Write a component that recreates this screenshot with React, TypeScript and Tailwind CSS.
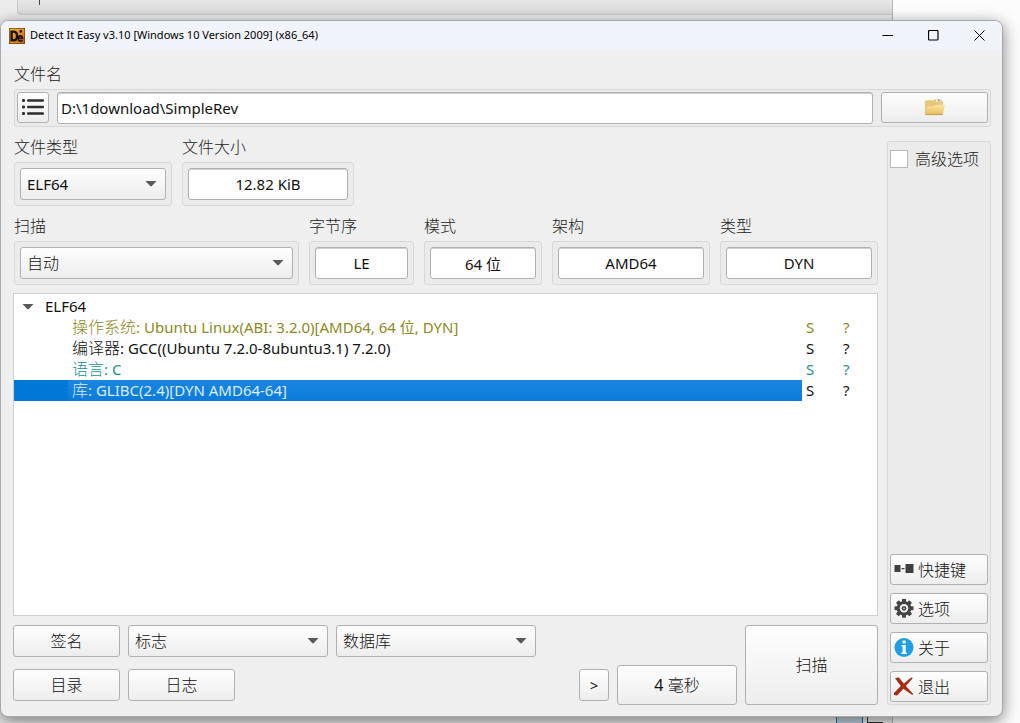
import React, { useState } from 'react';

const control = 'border border-[#b0b0b0] rounded-[3px]';
const raised = `${control} bg-linear-to-b from-[#fefefe] to-[#ededed]`;
const panel = 'border border-[#d8d8d8] rounded-[3px] bg-[#ebebeb]';

function Arrow({ className = '' }: { className?: string }) {
    return (
        <svg className={className} width="12" height="6" viewBox="0 0 12 6" aria-hidden="true">
            <path d="M0.5 0h11L6.6 5.2h-1.2z" fill="#595959" />
        </svg>
    );
}

function Select({ id, label, options, className = '' }: { id: string; label?: string; options: string[]; className?: string }) {
    return (
        <div className={`relative ${className}`}>
            <select id={id} aria-label={label} className={`${raised} block w-full h-8 appearance-none pl-1.5 pr-7`}>
                {options.map((option) => (
                    <option key={option}>{option}</option>
                ))}
            </select>
            <Arrow className="absolute right-[9px] top-[13px] pointer-events-none" />
        </div>
    );
}

function Field({ id, label, className = '', children }: { id: string; label: string; className?: string; children: React.ReactNode }) {
    return (
        <div className={className}>
            <label htmlFor={id} className="block h-6 leading-6 mb-[3px] font-light text-[#222]">{label}</label>
            <div className={`${panel} h-11 p-[5px]`}>{children}</div>
        </div>
    );
}

function ReadOnly({ id, value }: { id: string; value: string }) {
    return (
        <input
            id={id}
            readOnly
            defaultValue={value}
            className={`${control} block w-full h-8 bg-white text-center text-[15px] shadow-[inset_0_1px_0_#d0d0d0]`}
        />
    );
}

function Button({ className = '', children }: { className?: string; children: React.ReactNode }) {
    return <button type="button" className={`${raised} text-[#111] ${className}`}>{children}</button>;
}

function SideButton({ icon, children }: { icon: React.ReactNode; children: React.ReactNode }) {
    return (
        <button type="button" className={`${raised} w-full h-[31px] flex items-center gap-1 pl-[3px] font-light text-[#111]`}>
            {icon}
            <span>{children}</span>
        </button>
    );
}

function AppIcon() {
    return (
        <svg width="16" height="16" viewBox="0 0 16 16" aria-hidden="true">
            <defs>
                <linearGradient id="app" x1="0" y1="0" x2="1" y2="1">
                    <stop offset="0" stopColor="#efb52c" />
                    <stop offset="0.5" stopColor="#e58f20" />
                    <stop offset="1" stopColor="#c95d18" />
                </linearGradient>
            </defs>
            <rect width="16" height="16" fill="#5e3a10" />
            <rect x="0.6" y="0.6" width="14.8" height="14.8" fill="url(#app)" />
            <path d="M2.6 3.6h1.800c2.6 0 3.700 1.6 3.700 4.300s-1.100 4.400-3.700 4.400H2.6z" fill="none" stroke="#191307" strokeWidth="2.4" />
            <path d="M9.3 10.4h4.2c0-3.4-4.4-3.4-4.4 0 0 3.1 3.2 3.3 4.5 1.9" fill="none" stroke="#191307" strokeWidth="1.6" />
            <circle cx="11.8" cy="3.4" r="1.3" fill="#191307" />
        </svg>
    );
}

function ListIcon() {
    return (
        <svg width="22" height="18" viewBox="0 0 22 18" aria-hidden="true">
            <g fill="#2e2e2e">
                <rect x="0" y="0" width="3" height="3" rx="1" />
                <rect x="0" y="6.5" width="3" height="3" rx="1" />
                <rect x="0" y="13" width="3" height="3" rx="1" />
                <rect x="5" y="0.2" width="17" height="2.6" rx="1" />
                <rect x="5" y="6.7" width="17" height="2.6" rx="1" />
                <rect x="5" y="13.2" width="17" height="2.6" rx="1" />
            </g>
        </svg>
    );
}

function FolderIcon() {
    return (
        <svg width="22" height="18" viewBox="0 0 22 18" aria-hidden="true">
            <defs>
                <linearGradient id="folder" x1="0" y1="0" x2="0" y2="1">
                    <stop offset="0" stopColor="#fbe6a0" />
                    <stop offset="1" stopColor="#e6bd5c" />
                </linearGradient>
            </defs>
            <path d="M1 15.700V2.400L2 1.200h8l1.200-1.200h5.600L18 1.400l1 1.600V8.200l-2 7.500z" fill="#e7c878" />
            <path d="M12 0.800h5v1.600h-5z" fill="#f8f5e6" />
            <path d="M14 0.800h2v1.400h-2z" fill="#69b5c4" />
            <path d="M3.500 7.400l7-0.400 1-1H21l-2.400 9.800H1.400z" fill="url(#folder)" />
            <path d="M1.400 15.600h17.200" stroke="#c79d45" />
        </svg>
    );
}

function ShortcutIcon() {
    return (
        <svg width="20" height="20" viewBox="0 0 20 20" aria-hidden="true">
            <path d="M0.5 5h6v7h-6zM11.500 4h8v9h-8zM7.500 8h3v1.200h-3z" fill="#3f3f3f" />
        </svg>
    );
}

function GearIcon() {
    return (
        <svg width="20" height="20" viewBox="0 0 20 20" aria-hidden="true">
            <g fill="#444">
                {[0, 45, 90, 135].map((angle) => (
                    <rect key={angle} x="8" y="-0.2" width="4" height="19" rx="0.8" transform={`rotate(${angle} 10 9.3)`} />
                ))}
                <circle cx="10" cy="9.3" r="7.3" />
            </g>
            <circle cx="10" cy="9.3" r="4.2" fill="#f5f5f5" />
            <circle cx="10" cy="9.3" r="2.4" fill="#444" />
            <circle cx="10" cy="9.3" r="0.8" fill="#f5f5f5" />
        </svg>
    );
}

function InfoIcon() {
    return (
        <svg width="20" height="20" viewBox="0 0 20 20" aria-hidden="true">
            <circle cx="10" cy="9.5" r="9.5" fill="#1e9fe3" />
            <rect x="8.5" y="2.5" width="3.2" height="3" rx="0.8" fill="#fff" />
            <path d="M7.6 7h4.100v7.500h1.100V16H7.400v-1.500h1.200v-6h-1z" fill="#fff" />
        </svg>
    );
}

function ExitIcon() {
    return (
        <svg width="20" height="20" viewBox="0 0 20 20" aria-hidden="true">
            <path
                d="M1 1.300L4.700 0.200 9.900 6.600 17.200 0.500 18.900 1.100 11.800 9.100 19.200 17.100 18.300 17.900 9.300 11.700 3.200 18.500 0 17.900 0 15.900 6.800 9.100z"
                fill="#a82c12"
            />
        </svg>
    );
}

const rows = [
    { kind: '操作系统', text: 'Ubuntu Linux(ABI: 3.2.0)[AMD64, 64 位, DYN]', color: 'text-[#8c8a1c]' },
    { kind: '编译器', text: 'GCC((Ubuntu 7.2.0-8ubuntu3.1) 7.2.0)', color: 'text-[#111]' },
    { kind: '语言', text: 'C', color: 'text-[#1a8f8f]' },
    { kind: '库', text: 'GLIBC(2.4)[DYN AMD64-64]', color: 'text-[#111]' },
];

function ResultTree() {
    const [open, setOpen] = useState(true);
    const [selected, setSelected] = useState(3);

    return (
        <div className="flex-1 bg-white border border-[#cfcfcf] pt-0.5">
            <table className="w-full table-fixed border-collapse text-[15px] leading-[21px]">
                <colgroup>
                    <col />
                    <col className="w-[37px]" />
                    <col className="w-[38px]" />
                </colgroup>
                <tbody>
                    <tr className="h-[21px]">
                        <td className="p-0" colSpan={3}>
                            <button type="button" className="h-[21px] flex items-center gap-[11px] pl-2" onClick={() => setOpen(!open)}>
                                <Arrow className={open ? '' : '-rotate-90'} />
                                ELF64
                            </button>
                        </td>
                    </tr>
                    {open && rows.map((row, i) => (
                        <tr key={row.text} className={`h-[21px] ${row.color}`} onClick={() => setSelected(i)}>
                            <td className={i === selected ? 'p-0 pl-[54px] bg-[#0078d7] text-[#dcecfa]' : 'p-0 pl-[54px]'}>
                                <div className={i === selected ? 'h-[21px] pl-1 whitespace-nowrap bg-linear-to-b from-[#1a86df] to-[#0a7bdb]' : 'h-[21px] pl-1 whitespace-nowrap'}>
                                    <span className="text-[16px] font-light">{row.kind}</span>: {row.text}
                                </div>
                            </td>
                            <td className="p-0 pl-1">S</td>
                            <td className="p-0 pl-1">?</td>
                        </tr>
                    ))}
                </tbody>
            </table>
        </div>
    );
}

function TitleBar() {
    return (
        <header className="h-[29px] flex items-center bg-[#f0f3f9] pl-2 text-black">
            <AppIcon />
            <h1 className="ml-[5px] flex-1 text-[11px]">Detect It Easy v3.10 [Windows 10 Version 2009] (x86_64)</h1>
            <div className="flex">
                <button type="button" aria-label="Minimize" className="w-[46px] h-7 flex items-center justify-center">
                    <svg width="11" height="11" viewBox="0 0 11 11"><path d="M0.5 5.5H11" stroke="#000" /></svg>
                </button>
                <button type="button" aria-label="Maximize" className="w-[46px] h-7 flex items-center justify-center">
                    <svg width="11" height="11" viewBox="0 0 11 11"><rect x="0.5" y="0.5" width="9.5" height="9.5" rx="1" fill="none" stroke="#000" strokeWidth="1.2" /></svg>
                </button>
                <button type="button" aria-label="Close" className="w-[46px] h-7 flex items-center justify-center">
                    <svg width="11" height="11" viewBox="0 0 11 11"><path d="M0.5 0.5l10 10M10.5 0.5l-10 10" stroke="#000" /></svg>
                </button>
            </div>
        </header>
    );
}

function Backdrop() {
    return (
        <div className="absolute inset-0 overflow-hidden bg-[#fcfcfc]" aria-hidden="true">
            <div className="absolute inset-y-0 left-0 right-[127px] bg-[#ececec] border-r border-[#b5b5b5]">
                <div className="ml-[17px] h-[15px] rounded-bl border-l border-b border-[#c8c8c8] bg-linear-to-b from-[#e6e6e6] to-[#dadada]">
                    <div className="ml-[21px] w-px h-[5px] bg-[#444]" />
                </div>
                <div className="absolute bottom-0 right-[29px] w-[27px] h-2 border-x border-[#1a72b8] bg-[#c3d3df]">
                    <div className="mx-auto mt-px w-[15px] h-px bg-[#333]" />
                </div>
                <div className="absolute bottom-0 right-[9px] w-4 h-[6px] border-l border-b border-[#333]" />
            </div>
        </div>
    );
}

export default function App() {
    const [advanced, setAdvanced] = useState(false);

    return (
        <div className="relative min-h-screen flex flex-col pt-5 pr-[17px] pb-[6px] text-[16px] text-[#111] font-['Noto_Sans','Noto_Sans_CJK_SC',sans-serif]">
            <Backdrop />
            <div className="relative flex-1 flex flex-col overflow-hidden rounded-[8px] border border-[#a9a9a9] bg-[#efefef] shadow-[0_4px_16px_rgba(0,0,0,0.5)]">
                <TitleBar />
                <main className="flex-1 flex flex-col pt-3 pr-[11px] pb-[11px] pl-3">
                    <div className="pl-px">
                        <label htmlFor="file-name" className="block h-6 leading-6 mb-[3px] font-light text-[#222]">文件名</label>
                        <div className={`${panel} h-[38px] flex gap-2 p-[2px]`}>
                            <button type="button" aria-label="最近文件" className={`${raised} w-8 h-[31px] flex items-center justify-center`}>
                                <ListIcon />
                            </button>
                            <input
                                id="file-name"
                                defaultValue="D:\1download\SimpleRev"
                                className={`${control} flex-1 min-w-0 h-8 pl-[3px] bg-white text-[15px] shadow-[inset_0_1px_0_#d0d0d0]`}
                            />
                            <button type="button" aria-label="打开" className={`${raised} w-[107px] h-[31px] flex items-center justify-center`}>
                                <FolderIcon />
                            </button>
                        </div>
                    </div>

                    <div className="flex-1 flex gap-[9px] pt-2">
                        <div className="flex-1 min-w-0 flex flex-col">
                            <div className="flex gap-[10px] pl-px mb-2">
                                <Field id="file-type" label="文件类型" className="w-[158px]">
                                    <Select id="file-type" options={['ELF64']} className="text-[15px]" />
                                </Field>
                                <Field id="file-size" label="文件大小" className="w-[172px]">
                                    <ReadOnly id="file-size" value="12.82 KiB" />
                                </Field>
                            </div>
                            <div className="grid grid-cols-[285fr_105fr_118fr_158fr_158fr] gap-[10px] pl-px mb-2">
                                <Field id="scan-mode" label="扫描">
                                    <Select id="scan-mode" options={['自动']} className="font-light" />
                                </Field>
                                <Field id="endian" label="字节序">
                                    <ReadOnly id="endian" value="LE" />
                                </Field>
                                <Field id="mode" label="模式">
                                    <ReadOnly id="mode" value="64 位" />
                                </Field>
                                <Field id="arch" label="架构">
                                    <ReadOnly id="arch" value="AMD64" />
                                </Field>
                                <Field id="type" label="类型">
                                    <ReadOnly id="type" value="DYN" />
                                </Field>
                            </div>

                            <ResultTree />

                            <div className="flex gap-2 mt-[9px] h-20">
                                <div className="flex-1 flex flex-col gap-3">
                                    <div className="flex gap-2">
                                        <Button className="w-[107px] h-8 font-light">签名</Button>
                                        <Select id="flags" label="标志" options={['标志']} className="w-[200px] font-light" />
                                        <Select id="database" label="数据库" options={['数据库']} className="w-[200px] font-light" />
                                    </div>
                                    <div className="flex gap-2">
                                        <Button className="w-[107px] h-8 font-light">目录</Button>
                                        <Button className="w-[107px] h-8 font-light">日志</Button>
                                    </div>
                                </div>
                                <div className="flex items-end gap-2">
                                    <Button className="w-[30px] h-8 mb-1 text-[15px]">&gt;</Button>
                                    <Button className="w-[120px] h-10">4 <span className="font-light">毫秒</span></Button>
                                </div>
                                <Button className="w-[133px] font-light">扫描</Button>
                            </div>
                        </div>

                        <aside className={`${panel} w-[104px] mt-1.5 flex flex-col p-[2px]`}>
                            <label className="flex items-center gap-[7px] pt-[3px] whitespace-nowrap font-light text-[#222]">
                                <input
                                    type="checkbox"
                                    checked={advanced}
                                    onChange={(e) => setAdvanced(e.target.checked)}
                                    className="appearance-none size-[18px] shrink-0 border border-[#b8b8b8] bg-white checked:bg-[#0078d7]"
                                />
                                高级选项
                            </label>
                            <div className="mt-auto flex flex-col gap-2">
                                <SideButton icon={<ShortcutIcon />}>快捷键</SideButton>
                                <SideButton icon={<GearIcon />}>选项</SideButton>
                                <SideButton icon={<InfoIcon />}>关于</SideButton>
                                <SideButton icon={<ExitIcon />}>退出</SideButton>
                            </div>
                        </aside>
                    </div>
                </main>
            </div>
        </div>
    );
}
